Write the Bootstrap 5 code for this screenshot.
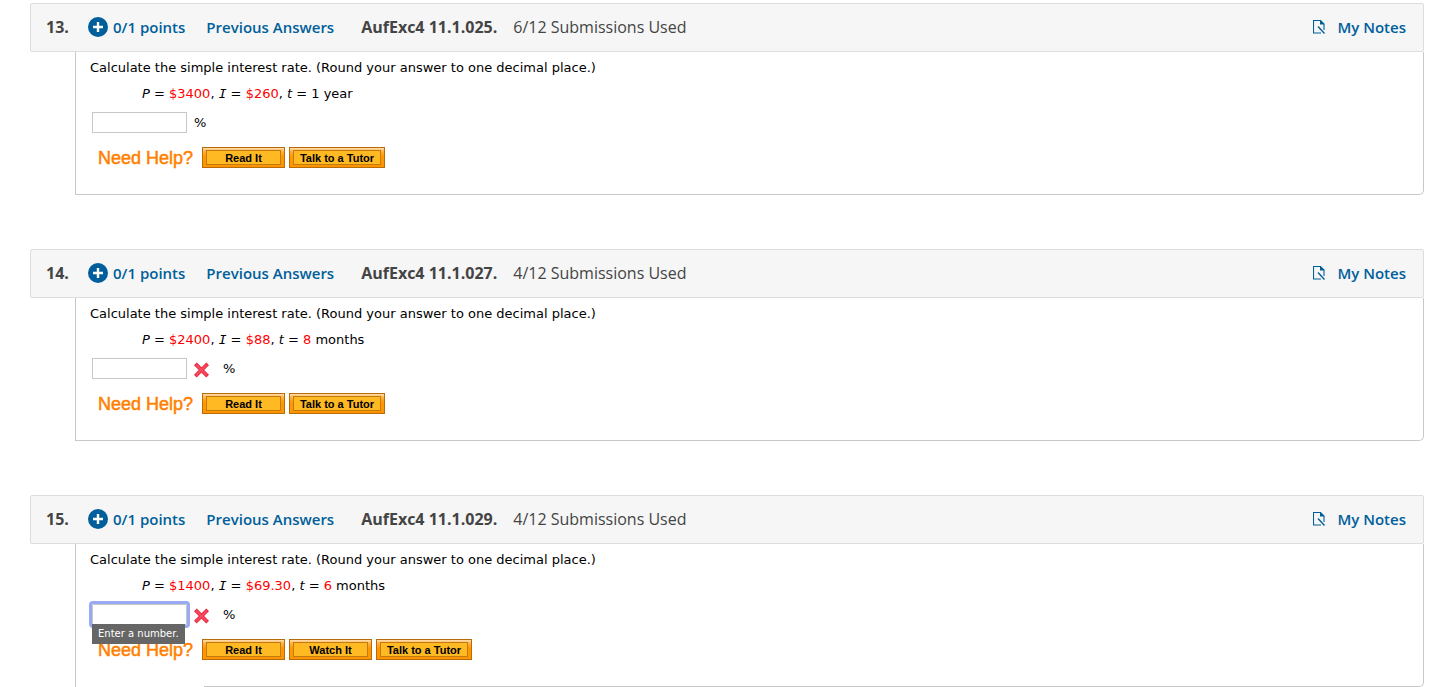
<!DOCTYPE html>
<html lang="en">
<head>
<meta charset="utf-8">
<meta name="viewport" content="width=device-width, initial-scale=1">
<title>Simple Interest Assignment</title>
<link href="https://cdn.jsdelivr.net/npm/bootstrap@5.3.0/dist/css/bootstrap.min.css" rel="stylesheet">
<style>
body { font-family: Verdana, "DejaVu Sans", sans-serif; font-size: 13px; line-height: 20px; color: #000; }
main { padding: 3px 16px 0 30px; }
.question { margin-bottom: 54px; }
.q-head { min-height: 49px; padding: 0 17px 2px 15px; background: #f6f6f6; border: 1px solid #ddd; border-radius: 2px; font-family: "Open Sans", sans-serif; font-size: 16px; color: #444; }
.q-head h2 { width: 42px; margin: 0; font-size: 16px; line-height: 20px; font-weight: 700; }
.q-head a { font-size: 15px; font-weight: 600; color: #005f9b; text-decoration: none; }
.q-points { margin-right: 21px; }
.q-prev { margin-right: 27px; }
.q-code { margin-right: 16px; font-weight: 700; }
.plus { margin-right: 5px; }
.q-body { margin-left: 45px; min-height: 143px; padding: 6px 14px 26px; border: 1px solid #c8c8c8; border-top: 0; border-radius: 0 0 5px 0; }
.q-body p { margin: 0 0 6px; }
.q-body .given { padding-left: 52px; margin-bottom: 8px; }
.given b { font-weight: 400; color: #f00; }
.given .cap-i { font-family: Verdana, "DejaVu Sans Mono", monospace; line-height: 1; }
.answer { height: 21px; margin: 0 0 14px 2px; }
.answer input { width: 95px; height: 21px; padding: 0 4px; border: 1px solid #c8c8c8; background: #fff; }
.answer .active-field { outline: 3px solid #99a9f5; border-radius: 1px; }
.cross { margin: 2px 14px 0 7px; }
.unit { margin-left: 7px; line-height: 22px; }
.cross + .unit { margin-left: 0; }
.hint { left: 0; top: 20px; z-index: 1; padding: 0 6px; background: #666; color: #fff; font-size: 10px; line-height: 20px; white-space: nowrap; }
.help { padding-left: 8px; gap: 4px; font-family: "Liberation Sans", Arial, sans-serif; }
.help-label { width: 100px; color: #ff7f00; font-size: 18px; line-height: 20px; -webkit-text-stroke: .5px #ff7f00; white-space: nowrap; }
.help button { width: 83px; height: 21px; padding: 2px 3px; border: 1px solid #b86b0b; background: linear-gradient(#ffdfb3, #ffb44c 3px, #ff9900 8px, #ff9500); font-size: 11px; line-height: 14px; font-weight: 700; color: #000; }
.help button span { display: block; height: 15px; border: 1px solid #c47a10; background: #ffb923; white-space: nowrap; }
.help .tutor { width: 96px; }
.edge-gap { left: 0; bottom: -1px; width: 128px; height: 1px; background: #fff; }
</style>
</head>
<body>
<svg width="0" height="0" class="position-absolute" aria-hidden="true">
  <symbol id="plus" viewBox="0 0 20 20"><circle cx="10" cy="10" r="10" fill="#005f9b"/><path d="M10 5v10M5 10h10" stroke="#fff" stroke-width="2.4"/></symbol>
  <symbol id="note" viewBox="0 0 12 14"><path d="M8 13H.5V.5H7.500L11 4V10" fill="none" stroke="#005f9b" stroke-width="1.100"/><path d="M7 0v4.500h4.500z" fill="#005f9b"/><path d="M5 6.500l6.500 7" fill="none" stroke="#005f9b" stroke-width="1.400"/></symbol>
  <symbol id="cross" viewBox="0 0 14 14"><path d="M2.500 2.500l9 9M11.500 2.500l-9 9" stroke="#e8283f" stroke-width="3.600" stroke-linecap="square"/><path d="M2.500 2.500l9 9M11.500 2.500l-9 9" stroke="#f9495c" stroke-width="2" stroke-linecap="round"/></symbol>
</svg>
<main>
  <section class="question">
    <header class="q-head d-flex align-items-center">
      <h2>13.</h2>
      <a href="#" class="q-points d-flex align-items-center"><svg class="plus" width="20" height="20" aria-hidden="true"><use href="#plus"/></svg>0/1 points</a>
      <a href="#" class="q-prev">Previous Answers</a>
      <span class="q-code">AufExc4 11.1.025.</span>
      <span>6/12 Submissions Used</span>
      <a href="#" class="ms-auto d-flex align-items-center gap-2"><svg class="me-1" width="12" height="14" aria-hidden="true"><use href="#note"/></svg>My Notes</a>
    </header>
    <div class="q-body">
      <p>Calculate the simple interest rate. (Round your answer to one decimal place.)</p>
      <p class="given"><i>P</i> = <b>$3400</b>, <i class="cap-i">I</i> = <b>$260</b>, <i>t</i> = 1 year</p>
      <div class="answer d-flex position-relative">
        <input id="a13" type="text" aria-label="Answer to question 13"><label class="unit" for="a13">%</label>
      </div>
      <div class="help d-flex align-items-center">
        <span class="help-label">Need Help?</span>
        <button type="button"><span>Read It</span></button>
        <button type="button" class="tutor"><span>Talk to a Tutor</span></button>
      </div>
    </div>
  </section>
  <section class="question">
    <header class="q-head d-flex align-items-center">
      <h2>14.</h2>
      <a href="#" class="q-points d-flex align-items-center"><svg class="plus" width="20" height="20" aria-hidden="true"><use href="#plus"/></svg>0/1 points</a>
      <a href="#" class="q-prev">Previous Answers</a>
      <span class="q-code">AufExc4 11.1.027.</span>
      <span>4/12 Submissions Used</span>
      <a href="#" class="ms-auto d-flex align-items-center gap-2"><svg class="me-1" width="12" height="14" aria-hidden="true"><use href="#note"/></svg>My Notes</a>
    </header>
    <div class="q-body">
      <p>Calculate the simple interest rate. (Round your answer to one decimal place.)</p>
      <p class="given"><i>P</i> = <b>$2400</b>, <i class="cap-i">I</i> = <b>$88</b>, <i>t</i> = <b>8</b> months</p>
      <div class="answer d-flex position-relative">
        <input id="a14" type="text" aria-label="Answer to question 14"><svg class="cross" width="15" height="20" role="img" aria-label="Incorrect"><use href="#cross"/></svg><label class="unit" for="a14">%</label>
      </div>
      <div class="help d-flex align-items-center">
        <span class="help-label">Need Help?</span>
        <button type="button"><span>Read It</span></button>
        <button type="button" class="tutor"><span>Talk to a Tutor</span></button>
      </div>
    </div>
  </section>
  <section class="question mb-0">
    <header class="q-head d-flex align-items-center">
      <h2>15.</h2>
      <a href="#" class="q-points d-flex align-items-center"><svg class="plus" width="20" height="20" aria-hidden="true"><use href="#plus"/></svg>0/1 points</a>
      <a href="#" class="q-prev">Previous Answers</a>
      <span class="q-code">AufExc4 11.1.029.</span>
      <span>4/12 Submissions Used</span>
      <a href="#" class="ms-auto d-flex align-items-center gap-2"><svg class="me-1" width="12" height="14" aria-hidden="true"><use href="#note"/></svg>My Notes</a>
    </header>
    <div class="q-body position-relative">
      <p>Calculate the simple interest rate. (Round your answer to one decimal place.)</p>
      <p class="given"><i>P</i> = <b>$1400</b>, <i class="cap-i">I</i> = <b>$69.30</b>, <i>t</i> = <b>6</b> months</p>
      <div class="answer d-flex position-relative">
        <input id="a15" class="active-field" type="text" aria-label="Answer to question 15" aria-describedby="hint15"><svg class="cross" width="15" height="20" role="img" aria-label="Incorrect"><use href="#cross"/></svg><label class="unit" for="a15">%</label>
        <span class="hint position-absolute" id="hint15" role="tooltip">Enter a number.</span>
      </div>
      <div class="help d-flex align-items-center">
        <span class="help-label">Need Help?</span>
        <button type="button"><span>Read It</span></button>
        <button type="button"><span>Watch It</span></button>
        <button type="button" class="tutor"><span>Talk to a Tutor</span></button>
      </div>
      <span class="edge-gap position-absolute"></span>
    </div>
  </section>
</main>
<script src="https://cdn.jsdelivr.net/npm/bootstrap@5.3.0/dist/js/bootstrap.bundle.min.js"></script>
</body>
</html>
